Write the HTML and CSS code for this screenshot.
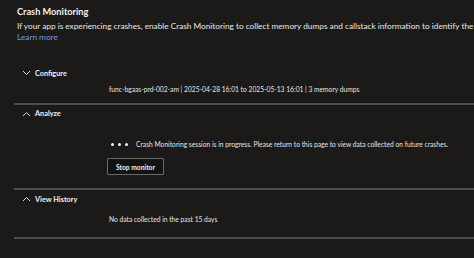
FILE: index.html
```html
<!DOCTYPE html>
<html>
<head>
<meta charset="utf-8">
<link rel="stylesheet" href="styles.css">
</head>
<body>
<div class="page">
  <div class="intro">
    <h1 class="title">Crash Monitoring</h1>
    <p class="desc">If your app is experiencing crashes, enable Crash Monitoring to collect memory dumps and callstack information to identify the</p>
    <a class="learn" href="#">Learn more</a>
  </div>
  <div class="sections">
    <section class="section sec-config">
      <div class="head">
        <svg class="chev" width="9" height="6" viewBox="0 0 9 6"><path d="M1 1 L4.5 4.5 L8 1" fill="none" stroke="#d6d6d6" stroke-width="1"/></svg>
        <span class="head-text">Configure</span>
      </div>
      <div class="body">
        <div class="line">func-bgaas-prd-002-am | 2025-04-28 16:01 to 2025-05-13 16:01 | 3 memory dumps</div>
      </div>
    </section>
    <section class="section sec-analyze">
      <div class="head">
        <svg class="chev" width="9" height="6" viewBox="0 0 9 6"><path d="M1 5 L4.5 1.5 L8 5" fill="none" stroke="#d6d6d6" stroke-width="1"/></svg>
        <span class="head-text">Analyze</span>
      </div>
      <div class="body">
        <div class="status">
          <span class="dots"><i></i><i></i><i></i></span>
          <span class="line">Crash Monitoring session is in progress. Please return to this page to view data collected on future crashes.</span>
        </div>
        <button class="btn">Stop monitor</button>
      </div>
    </section>
    <section class="section sec-history">
      <div class="head">
        <svg class="chev" width="9" height="6" viewBox="0 0 9 6"><path d="M1 5 L4.5 1.5 L8 5" fill="none" stroke="#d6d6d6" stroke-width="1"/></svg>
        <span class="head-text">View History</span>
      </div>
      <div class="body">
        <div class="line">No data collected in the past 15 days</div>
      </div>
    </section>
  </div>
</div>
</body>
</html>
```
FILE: styles.css
```css
html, body {
  margin: 0;
  padding: 0;
  background: #1b1a19;
  overflow: hidden;
}
body {
  width: 474px;
  height: 258px;
  font-family: "Lato", "Noto Sans", sans-serif;
  color: #e6e6e6;
}
.page {
  padding-top: 5px;
}
.intro {
  padding-left: 17px;
}
.title {
  margin: 0;
  font-size: 9.2px;
  line-height: 14px;
  font-weight: 700;
  color: #f2f2f2;
}
.desc {
  margin: 2px 0 0 0;
  font-size: 8.25px;
  line-height: 11px;
  white-space: nowrap;
  color: #e8e8e8;
}
.learn {
  display: block;
  font-size: 8.25px;
  line-height: 11px;
  color: #6f9be0;
  text-decoration: none;
}
.sections {
  margin-left: 14px;
  margin-top: 20px;
}
.section {
  border-bottom: 2px solid #4e4e4e;
}
.head {
  height: 20px;
  display: flex;
  align-items: center;
  padding-left: 8px;
}
.chev {
  display: block;
  margin-right: 4px;
}
.head-text {
  font-size: 7.3px;
  font-weight: 700;
  color: #f0f0f0;
}
.body {
  padding-left: 95px;
}
.line {
  font-size: 6.7px;
  line-height: 12px;
  white-space: nowrap;
  color: #e4e4e4;
}
.sec-config .body {
  padding-bottom: 8px;
}
.sec-analyze .head {
  height: 17px;
}
.sec-analyze .body {
  padding-top: 16px;
  padding-bottom: 13px;
}
.status {
  display: flex;
  align-items: center;
  height: 12px;
}
.dots {
  display: flex;
  gap: 4px;
  margin-left: 2px;
  margin-right: 8px;
}
.dots i {
  width: 3px;
  height: 3px;
  border-radius: 50%;
  background: #f2f2f2;
}
.btn {
  display: block;
  box-sizing: border-box;
  margin-top: 8px;
  margin-left: -2px;
  height: 17px;
  padding: 0 8px;
  background: #121212;
  border: 1px solid #6a6a6a;
  border-radius: 1px;
  color: #f0f0f0;
  font-family: "Lato", "Noto Sans", sans-serif;
  font-size: 6.7px;
  font-weight: 700;
}
.sec-history .head {
  height: 18px;
}
.sec-history .body {
  padding-top: 5px;
  padding-bottom: 12px;
}
```
